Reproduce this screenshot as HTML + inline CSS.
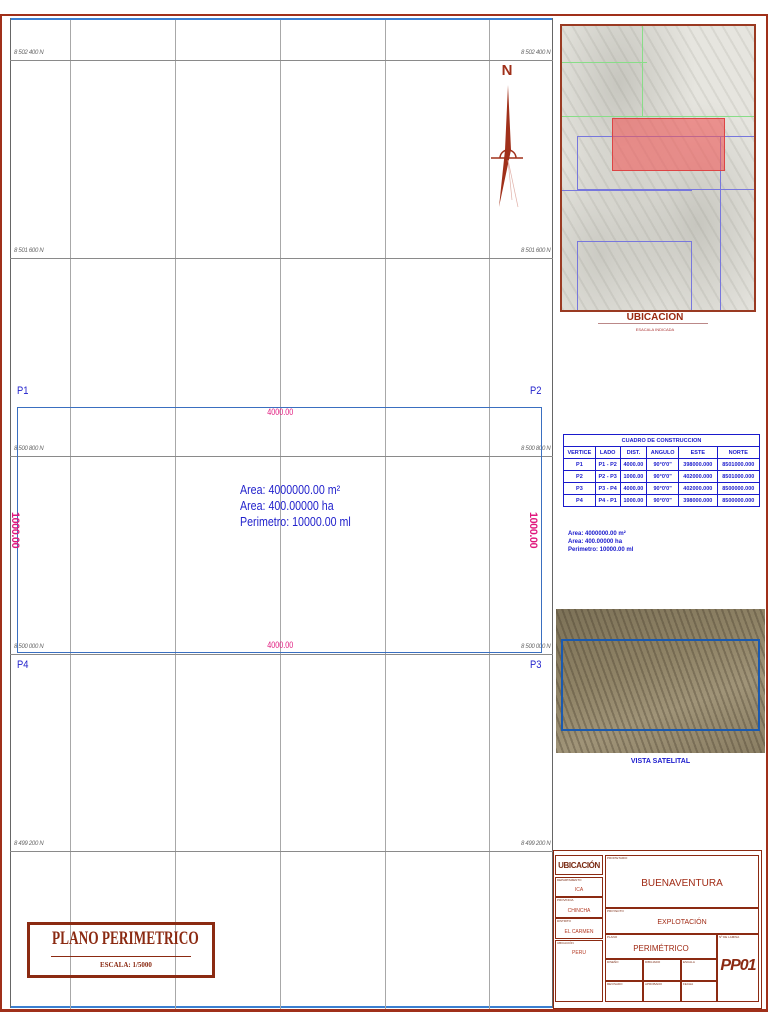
<!DOCTYPE html>
<html><head><meta charset="utf-8"><style>
*{margin:0;padding:0;box-sizing:border-box}
body{width:768px;height:1024px;background:#fff;position:relative;overflow:hidden;font-family:"Liberation Sans",sans-serif}
.a{position:absolute}
.vl{position:absolute;width:1px;background:#a8a8a8;top:20px;height:989px}
.hl{position:absolute;height:1px;background:#8a8a8a;left:10px;width:543px}
.n{position:absolute;font-size:6px;color:#666;font-style:italic;letter-spacing:-.3px}
.p{position:absolute;font-size:11px;color:#2222cc;transform:scaleX(.85);transform-origin:left}
.m{position:absolute;font-size:9px;color:#e0167c;transform:scaleX(.8)}
.tb{position:absolute;border:1.5px solid #8b2a12;font-size:3px;color:#7a2a12}
.tb span{position:absolute;left:1px;top:0;font-size:3px}
.tb b{position:absolute;left:0;right:0;text-align:center;font-weight:normal;color:#b43a24}
table{border-collapse:collapse}
td{border:1px solid #1a1acc;color:#1a1acc;font-size:5.5px;text-align:center;height:12px;font-weight:bold}
</style></head><body>
<div class="a" style="left:0;top:14px;width:768px;height:2px;background:#a0301a"></div>
<div class="a" style="left:0;top:1009px;width:768px;height:3px;background:#a0301a"></div>
<div class="a" style="left:0;top:14px;width:2px;height:998px;background:#a0301a"></div>
<div class="a" style="left:766px;top:14px;width:2px;height:998px;background:#a0301a"></div>
<div class="a" style="left:10px;top:18px;width:543px;height:2px;background:#3b7fd0"></div>
<div class="a" style="left:10px;top:1006px;width:543px;height:2px;background:#3b7fd0"></div>
<div class="a" style="left:10px;top:18px;width:1px;height:990px;background:#666"></div>
<div class="a" style="left:552px;top:18px;width:1px;height:990px;background:#666"></div>
<div class="vl" style="left:70px"></div><div class="vl" style="left:175px"></div><div class="vl" style="left:280px"></div><div class="vl" style="left:385px"></div><div class="vl" style="left:489px"></div>
<div class="hl" style="top:60px"></div><div class="hl" style="top:258px"></div><div class="hl" style="top:456px"></div><div class="hl" style="top:654px"></div><div class="hl" style="top:851px"></div>
<div class="n" style="left:14px;top:50px">8 502 400 N</div><div class="n" style="left:521px;top:50px">8 502 400 N</div>
<div class="n" style="left:14px;top:248px">8 501 600 N</div><div class="n" style="left:521px;top:248px">8 501 600 N</div>
<div class="n" style="left:14px;top:446px">8 500 800 N</div><div class="n" style="left:521px;top:446px">8 500 800 N</div>
<div class="n" style="left:14px;top:644px">8 500 000 N</div><div class="n" style="left:521px;top:644px">8 500 000 N</div>
<div class="n" style="left:14px;top:841px">8 499 200 N</div><div class="n" style="left:521px;top:841px">8 499 200 N</div>
<div class="a" style="left:17px;top:407px;width:525px;height:246px;border:1px solid #3a6fc0"></div>
<div class="p" style="left:17px;top:385px">P1</div><div class="p" style="left:530px;top:385px">P2</div>
<div class="p" style="left:17px;top:659px">P4</div><div class="p" style="left:530px;top:659px">P3</div>
<div class="m" style="left:264px;top:407px">4000.00</div><div class="m" style="left:264px;top:640px">4000.00</div>
<div class="m" style="left:-3px;top:524px;transform:rotate(90deg);font-size:11px;font-weight:bold;letter-spacing:-.5px">1000.00</div>
<div class="m" style="left:515px;top:524px;transform:rotate(90deg);font-size:11px;font-weight:bold;letter-spacing:-.5px">1000.00</div>
<div class="a" style="left:240px;top:482px;font-size:13px;line-height:16px;color:#2222cc;transform:scaleX(.82);transform-origin:left;white-space:nowrap">Area: 4000000.00 m²<br>Area: 400.00000 ha<br>Perimetro: 10000.00 ml</div>
<svg class="a" style="left:485px;top:55px" width="45" height="160" viewBox="485 55 45 160">
<text x="507" y="75" text-anchor="middle" font-family="Liberation Sans" font-weight="bold" font-size="15" fill="#a0301a">N</text>
<path d="M508 85 L511 150 L499 207 L505 150 Z" fill="#a0301a"/>
<path d="M500 158 A8 8 0 0 1 516 158" fill="none" stroke="#a0301a" stroke-width="1.5"/>
<line x1="491" y1="158" x2="523" y2="158" stroke="#a0301a" stroke-width="1.5"/>
<path d="M508 160 L518 207 M508 160 L512 200" stroke="#e0b0a8" stroke-width=".7"/>
</svg>
<div class="a" style="left:27px;top:922px;width:188px;height:56px;border:3px solid #8b2a12"></div>
<div class="a" style="left:52px;top:928px;font-family:'Liberation Serif',serif;font-weight:bold;font-size:19px;color:#8b2a12;transform:scaleX(.7);transform-origin:left;white-space:nowrap">PLANO PERIMETRICO</div>
<div class="a" style="left:51px;top:956px;width:140px;height:1px;background:#8b2a12"></div>
<div class="a" style="left:100px;top:961px;font-family:'Liberation Serif',serif;font-weight:bold;font-size:7px;color:#8b2a12">ESCALA: 1/5000</div>
<div class="a" style="left:560px;top:24px;width:196px;height:288px;border:2px solid #9a3a22;background:#e6e5df;overflow:hidden">
<div class="a" style="left:0;top:0;width:100%;height:100%;background:radial-gradient(ellipse at 30% 20%,rgba(140,140,130,.35),transparent 40%),radial-gradient(ellipse at 70% 70%,rgba(140,140,130,.35),transparent 45%),radial-gradient(ellipse at 20% 80%,rgba(140,140,130,.3),transparent 35%),repeating-linear-gradient(60deg,rgba(150,150,140,.18) 0 2px,transparent 2px 10px)"></div>
<div class="a" style="left:0;top:36px;width:85px;height:1px;background:#8d8"></div>
<div class="a" style="left:0;top:90px;width:196px;height:1px;background:#8d8"></div>
<div class="a" style="left:80px;top:0;width:1px;height:90px;background:#8d8"></div>
<div class="a" style="left:15px;top:110px;width:180px;height:54px;border:1px solid #77d"></div>
<div class="a" style="left:0;top:164px;width:130px;height:1px;background:#77d"></div>
<div class="a" style="left:15px;top:215px;width:115px;height:90px;border:1px solid #77d"></div>
<div class="a" style="left:158px;top:110px;width:1px;height:190px;background:#77d"></div>
<div class="a" style="left:50px;top:92px;width:113px;height:53px;background:rgba(240,90,90,.6);border:1px solid #d44"></div>
</div>
<div class="a" style="left:600px;top:312px;font-size:10px;font-weight:bold;color:#9a2a12;width:110px;text-align:center">UBICACION</div>
<div class="a" style="left:598px;top:323px;width:110px;height:1px;background:#b88"></div>
<div class="a" style="left:600px;top:327px;font-size:4px;color:#a33;width:110px;text-align:center">ESACALA INDICADA</div>
<table class="a" style="left:563px;top:434px;width:197px">
<tr><td colspan="6">CUADRO DE CONSTRUCCION</td></tr>
<tr><td>VERTICE</td><td>LADO</td><td>DIST.</td><td>ANGULO</td><td>ESTE</td><td>NORTE</td></tr>
<tr><td>P1</td><td>P1 - P2</td><td>4000.00</td><td>90°0'0"</td><td>398000.000</td><td>8501000.000</td></tr>
<tr><td>P2</td><td>P2 - P3</td><td>1000.00</td><td>90°0'0"</td><td>402000.000</td><td>8501000.000</td></tr>
<tr><td>P3</td><td>P3 - P4</td><td>4000.00</td><td>90°0'0"</td><td>402000.000</td><td>8500000.000</td></tr>
<tr><td>P4</td><td>P4 - P1</td><td>1000.00</td><td>90°0'0"</td><td>398000.000</td><td>8500000.000</td></tr>
</table>
<div class="a" style="left:568px;top:530px;font-size:6px;line-height:8px;color:#1a1acc;font-weight:bold">Area: 4000000.00 m²<br>Area: 400.00000 ha<br>Perimetro: 10000.00 ml</div>
<div class="a" style="left:556px;top:609px;width:209px;height:144px;background:linear-gradient(160deg,#7d7258 0%,#8f8366 40%,#a09478 65%,#8a7e63 100%);overflow:hidden">
<div class="a" style="left:0;top:0;width:100%;height:100%;background:repeating-linear-gradient(70deg,rgba(60,50,35,.3) 0 2px,transparent 2px 6px)"></div>
<div class="a" style="left:5px;top:30px;width:199px;height:92px;border:2px solid #1a5ab0"></div>
</div>
<div class="a" style="left:556px;top:758px;width:209px;text-align:center;font-size:7px;font-weight:bold;color:#1a1acc">VISTA SATELITAL</div>
<div class="a" style="left:553px;top:850px;width:209px;height:159px;border:1.5px solid #8b2a12"></div>
<div class="tb" style="left:555px;top:855px;width:48px;height:20px"><b style="top:5px;font-size:8px;color:#7a2a12;font-weight:bold;letter-spacing:-.4px">UBICACIÓN</b></div>
<div class="tb" style="left:555px;top:877px;width:48px;height:20px"><span>DEPARTAMENTO</span><b style="top:9px;font-size:5px">ICA</b></div>
<div class="tb" style="left:555px;top:897px;width:48px;height:21px"><span>PROVINCIA</span><b style="top:10px;font-size:5px">CHINCHA</b></div>
<div class="tb" style="left:555px;top:918px;width:48px;height:21px"><span>DISTRITO</span><b style="top:10px;font-size:5px">EL CARMEN</b></div>
<div class="tb" style="left:555px;top:940px;width:48px;height:62px"><span>UBICACIÓN</span><b style="top:9px;font-size:5px">PERU</b></div>
<div class="tb" style="left:605px;top:855px;width:154px;height:53px"><span>PROPIETARIO</span><b style="top:22px;font-size:10px;color:#a02a14">BUENAVENTURA</b></div>
<div class="tb" style="left:605px;top:908px;width:154px;height:26px"><span>PROYECTO</span><b style="top:10px;font-size:7px;color:#a02a14">EXPLOTACIÓN</b></div>
<div class="tb" style="left:605px;top:934px;width:112px;height:25px"><span>PLANO</span><b style="top:9px;font-size:8px;color:#a02a14">PERIMÉTRICO</b></div>
<div class="tb" style="left:717px;top:934px;width:42px;height:68px"><span>Nº DE LAMINA</span><b style="top:22px;font-size:16px;font-style:italic;font-weight:bold;color:#8b2a12;letter-spacing:-1px">PP01</b></div>
<div class="tb" style="left:605px;top:959px;width:38px;height:22px"><span>DISEÑO</span></div>
<div class="tb" style="left:643px;top:959px;width:38px;height:22px"><span>DIBUJADO</span></div>
<div class="tb" style="left:681px;top:959px;width:36px;height:22px"><span>ESCALA</span></div>
<div class="tb" style="left:605px;top:981px;width:38px;height:21px"><span>REVISADO</span></div>
<div class="tb" style="left:643px;top:981px;width:38px;height:21px"><span>APROBADO</span></div>
<div class="tb" style="left:681px;top:981px;width:36px;height:21px"><span>FECHA</span></div>
</body></html>
